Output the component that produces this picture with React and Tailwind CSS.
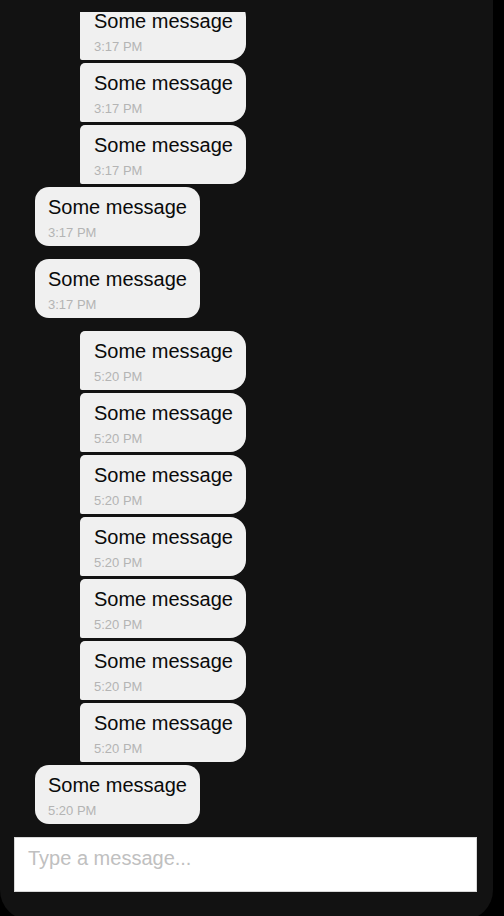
import React from "react";

const msgs = [
  { t: "3:17 PM", indent: true, gap: 3 },
  { t: "3:17 PM", indent: true, gap: 3 },
  { t: "3:17 PM", indent: true, gap: 3 },
  { t: "3:17 PM", indent: true, gap: 3 },
  { t: "3:17 PM", indent: false, gap: 3 },
  { t: "3:17 PM", indent: false, gap: 13 },
  { t: "5:20 PM", indent: true, gap: 13 },
  { t: "5:20 PM", indent: true, gap: 3 },
  { t: "5:20 PM", indent: true, gap: 3 },
  { t: "5:20 PM", indent: true, gap: 3 },
  { t: "5:20 PM", indent: true, gap: 3 },
  { t: "5:20 PM", indent: true, gap: 3 },
  { t: "5:20 PM", indent: true, gap: 3 },
  { t: "5:20 PM", indent: false, gap: 3 },
];

function Bubble({ t, indent, gap }) {
  return (
    <div
      className={
        "shrink-0 w-fit bg-[#f0f0f0] pt-[8px] pb-[5px] " +
        (gap === 13 ? "mt-[13px] " : "mt-[3px] ") +
        (indent
          ? "ml-[80px] pl-[14px] pr-[13px] rounded-tl-[5px] rounded-bl-[2px] rounded-r-[16px]"
          : "ml-[35px] pl-[13px] pr-[13px] rounded-[14px]")
      }
    >
      <div className="text-[20px] leading-[24px] text-[#0a0a0a]">Some message</div>
      <div className="mt-[6px] text-[13px] leading-[16px] text-[#b4b4b4]">{t}</div>
    </div>
  );
}

export default function App() {
  return (
    <div
      className="bg-black h-[916px] overflow-hidden"
      style={{ fontFamily: '"Liberation Sans", Arial, sans-serif' }}
    >
      <div className="w-[493px] h-[920px] bg-[#121212] rounded-b-[30px] flex flex-col pt-[12px] pb-[28px]">
        <div className="flex-1 min-h-0 overflow-hidden flex flex-col justify-end">
          {msgs.map((m, i) => (
            <Bubble key={i} {...m} />
          ))}
        </div>
        <div className="shrink-0 mt-[13px] ml-[14px] mr-[16px] h-[55px] bg-white border border-[#d8d8d8] pl-[13px] pt-[9px]">
          <div className="text-[20px] leading-[23px] text-[#c0c0c0]">Type a message...</div>
        </div>
      </div>
    </div>
  );
}
